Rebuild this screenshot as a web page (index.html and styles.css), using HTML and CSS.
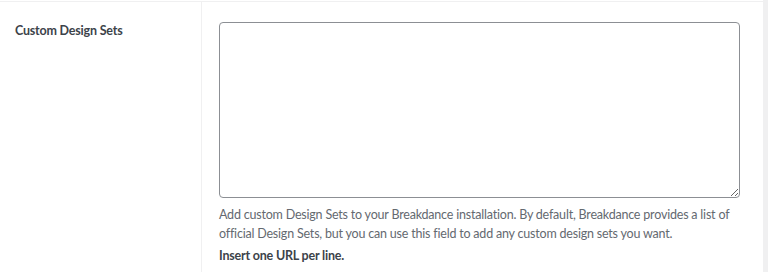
FILE: index.html
```html
<!DOCTYPE html>
<html>
<head>
<meta charset="utf-8">
<link rel="stylesheet" href="styles.css">
</head>
<body>
<div class="card">
  <div class="row">
    <div class="label-col">
      <label class="label">Custom Design Sets</label>
    </div>
    <div class="field-col">
      <textarea class="input"></textarea>
      <p class="desc">Add custom Design Sets to your Breakdance installation. By default, Breakdance provides a list of official Design Sets, but you can use this field to add any custom design sets you want.</p>
      <p class="note">Insert one URL per line.</p>
    </div>
  </div>
</div>
</body>
</html>
```
FILE: styles.css
```css
html, body {
  margin: 0;
  padding: 0;
  height: 100%;
  background: #f0f0f1;
  overflow: hidden;
}
.card {
  width: 763px;
  height: 100%;
  background: #ffffff;
  padding-top: 1px;
  box-sizing: border-box;
  font-family: Lato, "Open Sans", sans-serif;
}
.row {
  display: grid;
  grid-template-columns: 202px 1fr;
  border-top: 1px solid #f0f0f1;
  height: 100%;
}
.label-col {
  padding: 17px 0 0 15px;
  border-right: 1px solid #f0f0f1;
}
.label {
  font-size: 12.5px;
  letter-spacing: -0.2px;
  font-weight: 700;
  color: #3c434a;
}
.field-col {
  padding: 20px 0 0 17px;
}
.input {
  display: block;
  width: 521px;
  height: 176px;
  box-sizing: border-box;
  border: 1px solid #8c8f94;
  border-radius: 4px;
  margin: 0;
  resize: vertical;
}
.desc {
  margin: 7px 0 0;
  width: 530px;
  font-size: 12.5px;
  letter-spacing: -0.2px;
  line-height: 19px;
  color: #646970;
}
.note {
  margin: 3px 0 0;
  font-size: 12.5px;
  letter-spacing: -0.2px;
  line-height: 19px;
  font-weight: 700;
  color: #3c434a;
}
```
